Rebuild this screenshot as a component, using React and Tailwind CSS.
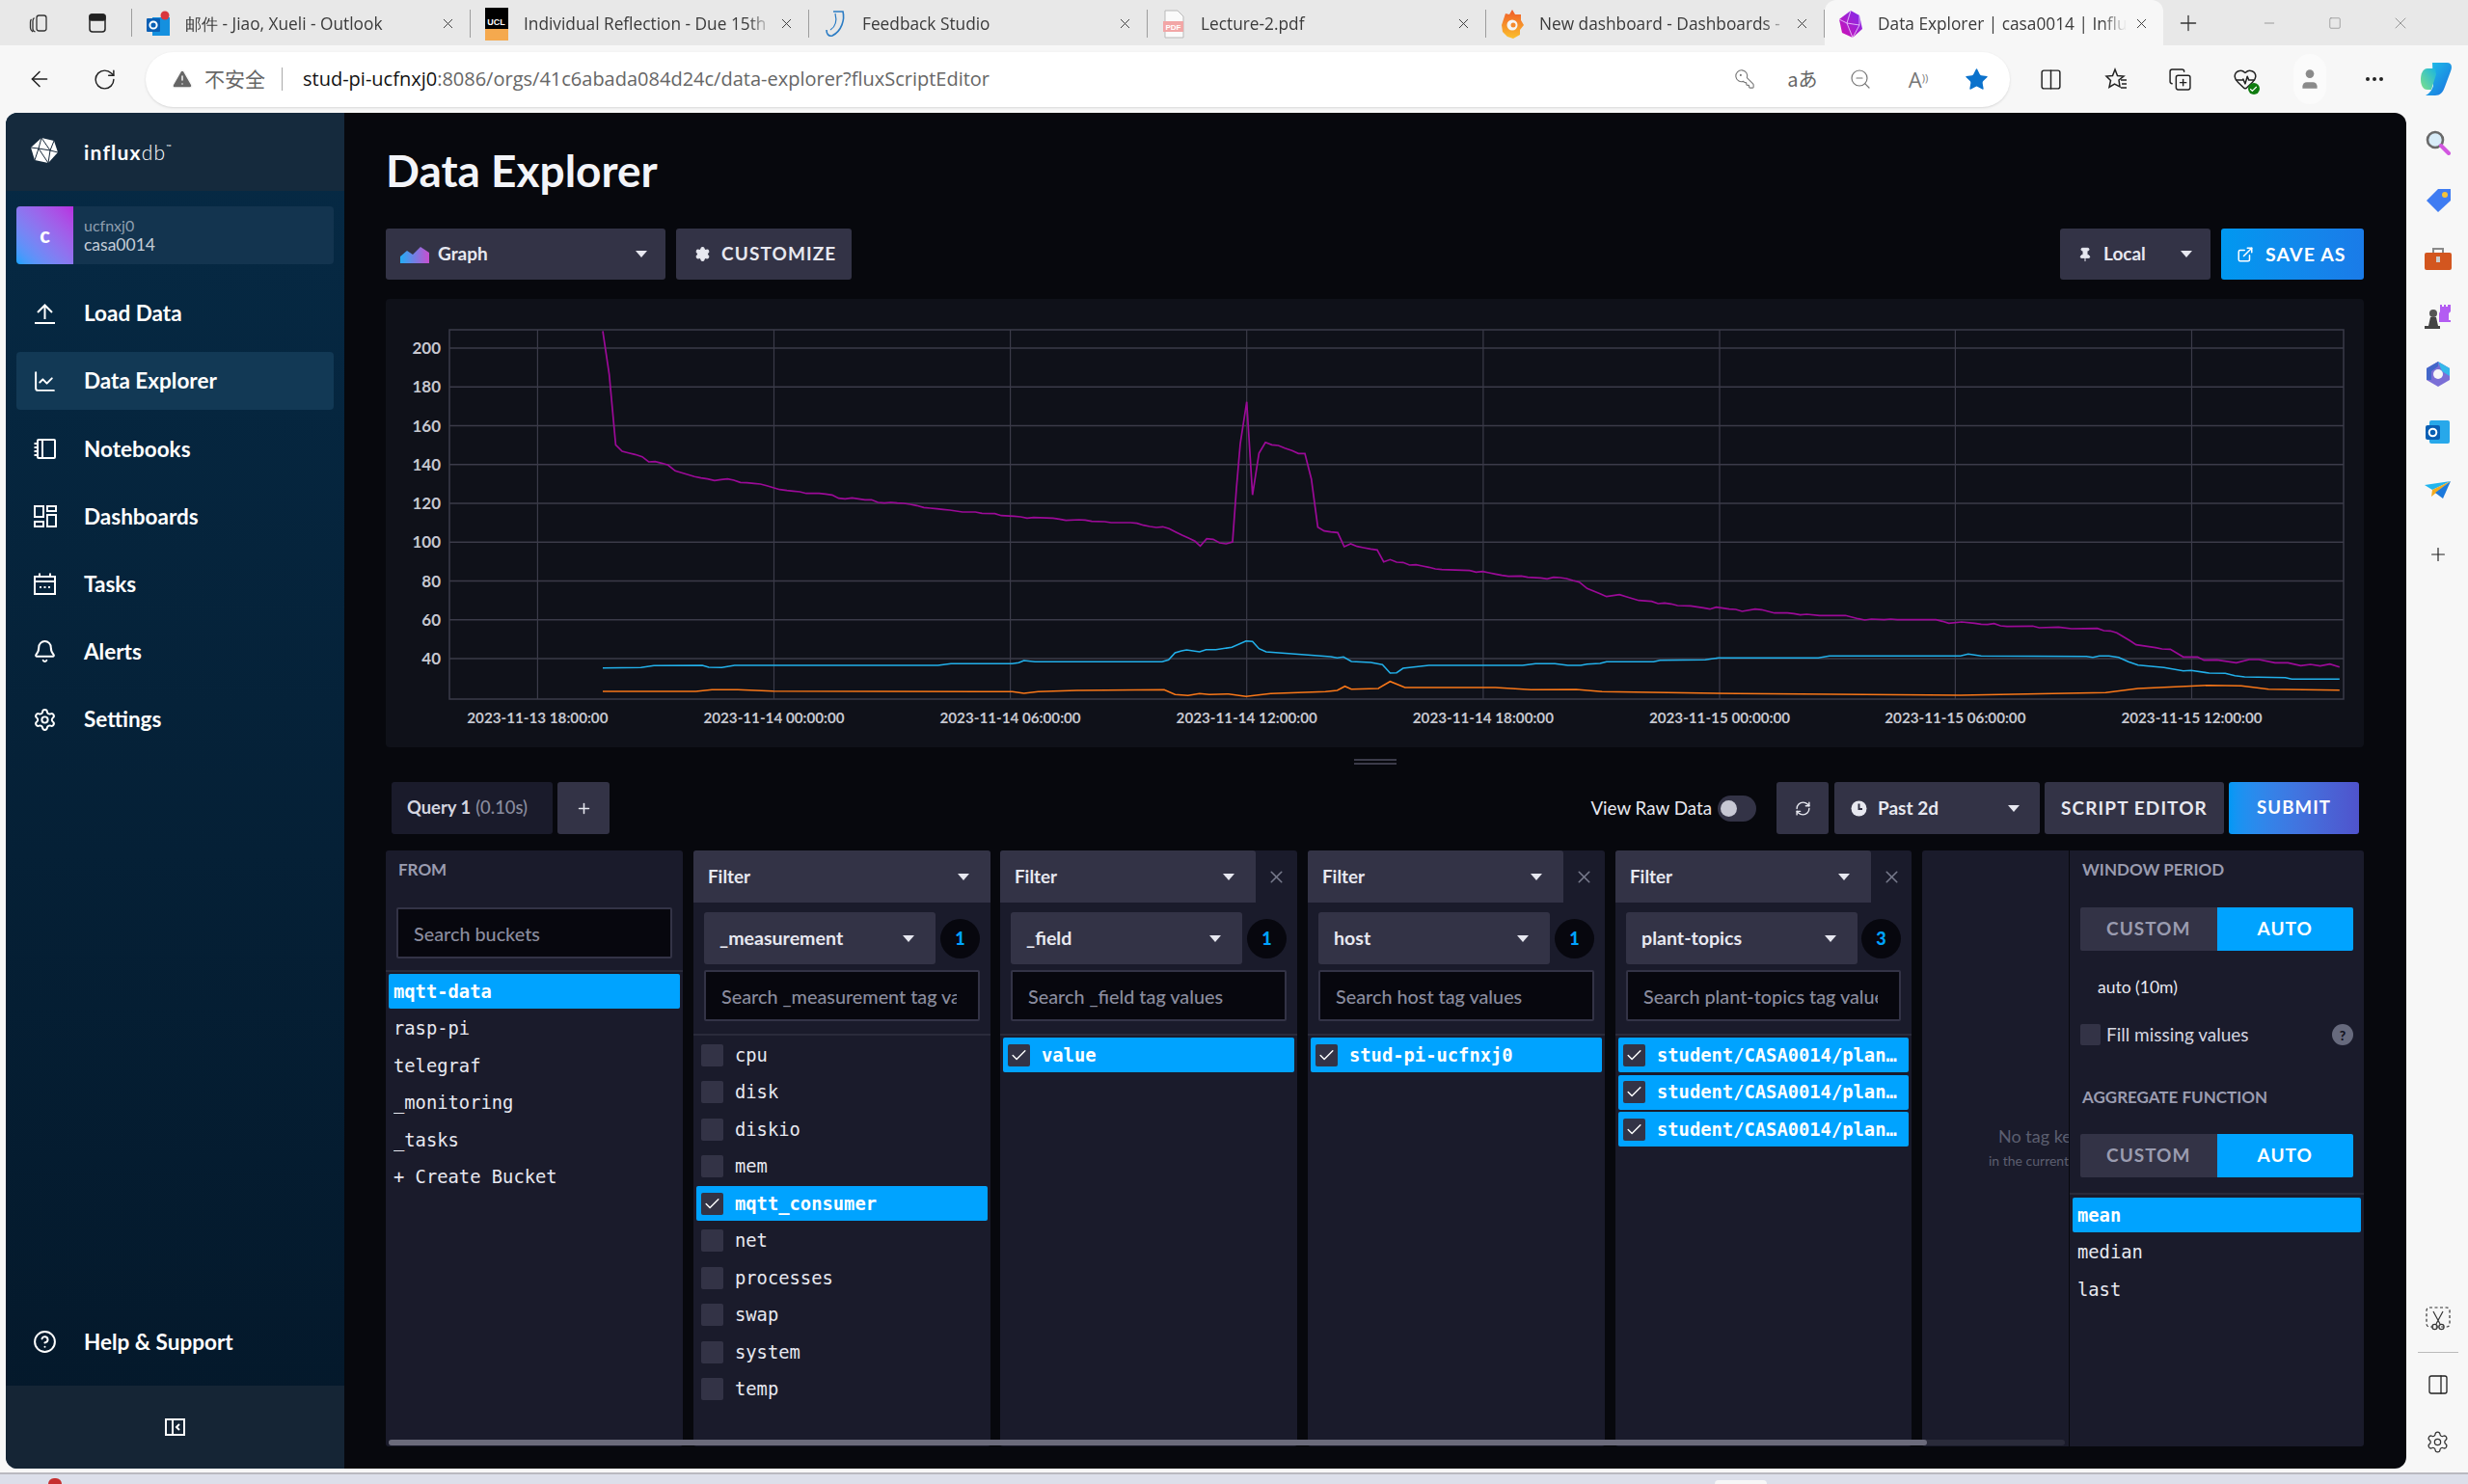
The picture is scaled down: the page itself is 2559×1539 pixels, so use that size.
import React from 'react';
import {
  ArrowLeft, RotateCw, KeyRound, ZoomOut, Star, Columns2, CopyPlus, HeartPulse, User, MoreHorizontal,
  LineChart, Bell, Settings, HelpCircle, Check, X, Plus, Minus, Square,
  RefreshCw, ExternalLink, PanelRight, TriangleAlert, Pin,
} from 'lucide-react';

const UI = "font-['Lato','Open_Sans',sans-serif]";

// traced from the reference, as pairs in two crop spaces (left half / right half)
const L = 390, R = 1420, SX = 1.4933;
const toPts = (arr, base) => {
  const out = [];
  for (let i = 0; i < arr.length; i += 2) out.push(`${(base + arr[i] / SX).toFixed(1)},${(320 + arr[i + 1] / 3).toFixed(1)}`);
  return out.join(' ');
};

const purpleA = [351,70,361,205,371,424,381,444,391,449,401,454,412,461,422,477,432,476,442,481,452,487,463,505,473,511,483,517,493,523,503,527,513,530,524,535,534,532,544,530,554,534,564,541,574,542,585,544,595,546,605,551,615,557,625,563,636,566,646,568,656,570,666,575,686,575,696,577,706,580,716,590,726,592,737,589,747,592,757,595,767,595,777,603,787,605,797,603,807,605,817,606,827,609,837,613,848,619,858,621,868,623,878,625,888,627,898,630,908,633,928,633,938,637,958,638,968,644,988,646,998,648,1008,652,1018,650,1048,652,1058,655,1068,659,1088,657,1098,658,1108,662,1128,663,1138,666,1168,666,1178,668,1188,674,1198,678,1208,681,1218,679,1228,685,1238,695,1248,705,1258,714,1268,724,1276,739,1286,716,1296,718,1306,729,1316,732,1326,726,1332,560,1338,420,1348,290,1357,580,1367,450,1377,416,1387,424,1397,426,1407,434,1418,442,1428,451,1438,451,1448,530,1458,680,1468,692,1478,695,1489,697,1499,741,1509,732,1519,740,1529,744,1540,748,1550,751,1560,788];
const purpleB = [22,788,32,781,42,789,52,790,62,798,72,797,82,801,92,805,102,810,112,812,155,815,165,820,175,818,185,822,195,826,205,830,215,833,235,832,245,836,265,838,275,841,285,836,295,837,305,840,315,846,325,851,337,871,347,879,357,887,367,896,387,890,397,896,407,902,417,908,437,911,447,918,457,916,467,919,477,924,497,925,507,928,517,931,527,935,537,929,557,935,567,936,577,942,597,935,607,937,617,942,627,947,647,947,657,949,667,953,677,951,697,955,737,955,747,960,757,965,767,969,777,966,797,968,807,966,817,968,877,968,887,973,897,979,917,975,937,979,947,982,957,983,967,980,977,987,987,989,1027,988,1037,993,1067,991,1087,996,1127,995,1137,1002,1147,1003,1157,1009,1167,1021,1177,1033,1187,1046,1197,1049,1217,1055,1227,1059,1240,1060,1260,1084,1282,1084,1292,1094,1312,1093,1342,1102,1362,1092,1377,1092,1402,1102,1422,1102,1442,1111,1457,1107,1472,1112,1487,1106,1502,1115];
const blueA = [351,1118,410,1117,430,1111,505,1110,515,1116,535,1117,555,1110,870,1110,890,1105,985,1105,995,1102,1003,1095,1020,1099,1217,1099,1227,1093,1237,1071,1247,1065,1255,1062,1275,1068,1285,1061,1300,1061,1325,1054,1347,1034,1357,1036,1367,1058,1378,1068,1478,1083,1488,1087,1498,1084,1510,1098,1540,1101,1558,1108];
const blueB = [20,1108,32,1134,42,1133,52,1119,92,1110,237,1110,257,1105,287,1105,307,1110,327,1110,337,1106,357,1104,367,1099,440,1099,450,1094,520,1093,540,1087,695,1087,712,1081,915,1081,927,1075,947,1081,1110,1082,1120,1085,1130,1081,1145,1081,1160,1085,1175,1099,1190,1109,1230,1117,1260,1127,1272,1126,1300,1134,1325,1135,1340,1142,1355,1146,1418,1148,1428,1153,1502,1153];
const orangeA = [351,1191,495,1191,520,1186,560,1186,615,1190,985,1192,1003,1197,1025,1192,1085,1188,1220,1186,1237,1201,1257,1204,1275,1198,1290,1201,1320,1199,1347,1207,1385,1198,1470,1192,1488,1188,1500,1175,1510,1184,1552,1182];
const orangeB = [15,1180,32,1160,55,1179,195,1179,250,1186,320,1185,360,1192,570,1198,915,1203,1140,1195,1190,1182,1300,1172,1350,1174,1392,1184,1502,1187];

const Caret = ({ className = 'w-[12px] h-[7px]' }) => (
  <svg viewBox="0 0 12 7" className={`${className} shrink-0`}><polygon points="0,0 12,0 6,7" fill="#e7e8f0" /></svg>
);

const InfluxLogo = ({ size = 30, fill = '#fff', line = '#16283a' }) => (
  <svg width={size} height={size} viewBox="0 0 30 30" className="shrink-0">
    <polygon points="12,2 25,5 29,17 19,28 5,25 1,12" fill={fill} />
    <path d="M12 2 L9 13 L1 12 M9 13 L21 15 L25 5 M21 15 L19 28 M9 13 L5 25 M21 15 L29 17 M12 2 L21 15 M9 13 L19 28" stroke={line} strokeWidth="1" fill="none" />
  </svg>
);

const TabIcon = ({ kind }) => {
  if (kind === 'outlook') return (
    <svg width="26" height="28" viewBox="0 0 26 28" className="shrink-0">
      <rect x="7" y="7" width="18" height="19" fill="#1490df" />
      <rect x="1" y="8" width="14" height="14" rx="1" fill="#0a5fb4" />
      <circle cx="8" cy="15" r="3.6" fill="none" stroke="#fff" strokeWidth="2" />
      <circle cx="20" cy="5" r="4.5" fill="#d9363e" />
    </svg>
  );
  if (kind === 'ucl') return (
    <div className="w-[24px] h-[34px] shrink-0 flex flex-col">
      <div className="h-[22px] bg-black text-white text-[9px] font-bold font-['Liberation_Sans',sans-serif] flex items-end justify-center leading-none pb-[2px]">UCL</div>
      <div className="flex-1 bg-[#f5a94e]" />
    </div>
  );
  if (kind === 'feedback') return (
    <svg width="24" height="30" viewBox="0 0 24 30" className="shrink-0" fill="none">
      <path d="M10 2 H20 C22 10 19 22 9 27 C5 28 3 25 3 21" stroke="#2b7cc4" strokeWidth="1.6" />
      <path d="M12 4 C14 12 12 18 7 21" stroke="#2b7cc4" strokeWidth="1.2" />
    </svg>
  );
  if (kind === 'pdf') return (
    <svg width="24" height="30" viewBox="0 0 24 30" className="shrink-0">
      <path d="M3 1 H16 L22 7 V29 H3 Z" fill="#fafafa" stroke="#b9b9b9" />
      <rect x="1" y="12" width="21" height="11" fill="#f2a6a6" />
      <text x="11.5" y="21" textAnchor="middle" fontSize="8" fontWeight="700" fill="#fff" fontFamily="Liberation Sans">PDF</text>
    </svg>
  );
  if (kind === 'grafana') return (
    <svg width="24" height="32" viewBox="0 0 24 32" className="shrink-0">
      <defs><linearGradient id="gf" x1="0" y1="1" x2="0" y2="0"><stop offset="0" stopColor="#fbc02d" /><stop offset="1" stopColor="#f05a28" /></linearGradient></defs>
      <path d="M12 1 L15 6 L21 6 L21 12 L24 17 L20 22 L20 27 L13 31 L7 29 L2 24 L1 17 L3 11 L5 5 L9 6 Z" fill="url(#gf)" />
      <circle cx="12" cy="17" r="5.5" fill="#f5f5f5" />
      <circle cx="13" cy="17" r="2.5" fill="#f58a2c" />
    </svg>
  );
  return (
    <svg width="24" height="30" viewBox="0 0 24 30" className="shrink-0">
      <defs><linearGradient id="ix" x1="0" y1="1" x2="1" y2="0"><stop offset="0" stopColor="#d40fb0" /><stop offset="1" stopColor="#7a2ff0" /></linearGradient></defs>
      <polygon points="12,1 21,6 24,20 14,29 3,24 0,10" fill="url(#ix)" />
      <path d="M12 1 L8 14 L14 29 M8 14 L21 16 L21 6 M0 10 L8 14 M21 16 L14 29" stroke="#f0d8ff" strokeWidth="0.8" fill="none" />
    </svg>
  );
};

const Tab = ({ icon, title, active, sep = true }) => (
  <div className={`w-[351px] flex items-center shrink-0 pt-[2px] ${active ? 'bg-[#f7f7f7] rounded-t-xl h-[47px] self-end' : 'h-full'}`}>
    <div className="w-[55px] shrink-0 flex justify-center pr-[2px]"><TabIcon kind={icon} /></div>
    <div className="w-[258px] overflow-hidden whitespace-nowrap text-[17.3px] text-[#3a3a3a] [mask-image:linear-gradient(to_right,black_90%,transparent)]">{title}</div>
    <div className="ml-auto mr-[13px] w-[20px] flex justify-center"><X size={17} strokeWidth={1.3} className="text-[#333]" /></div>
    {sep && <div className="w-px h-[29px] bg-[#9d9d9d] shrink-0" />}
  </div>
);

const TabStrip = () => (
  <div className="h-[47px] bg-[#e8e8e8] flex items-center shrink-0 font-['Open_Sans',sans-serif]">
    <div className="w-[71px] flex justify-end pr-[18px]">
      <svg width="24" height="24" viewBox="0 0 24 24" fill="none" stroke="#333" strokeWidth="1.3"><rect x="9" y="4" width="10" height="16" rx="2.5" /><path d="M6.5 6.5 C5 7.5 5 8 5 10 V18 C5 20 6 20.5 7.5 21 M3.5 8 C2.5 9 2.5 10 2.5 11 V17 C2.5 19 3.5 20 5 21" /></svg>
    </div>
    <div className="w-[60px] flex justify-center">
      <svg width="22" height="24" viewBox="0 0 22 24" fill="none" stroke="#222" strokeWidth="1.5"><rect x="3" y="3" width="16" height="18" rx="3" /><rect x="3" y="3" width="16" height="6" rx="2" fill="#222" /></svg>
    </div>
    <div className="w-[6px] flex justify-end"><div className="w-px h-[29px] bg-[#9d9d9d]" /></div>
    <Tab icon="outlook" title="邮件 - Jiao, Xueli - Outlook" />
    <Tab icon="ucl" title="Individual Reflection - Due 15th" />
    <Tab icon="feedback" title="Feedback Studio" />
    <Tab icon="pdf" title="Lecture-2.pdf" />
    <Tab icon="grafana" title="New dashboard - Dashboards -" />
    <Tab icon="influx" title="Data Explorer | casa0014 | Influx" active sep={false} />
    <div className="w-[52px] flex justify-center"><Plus size={26} strokeWidth={1.2} className="text-[#333]" /></div>
    <div className="w-[68px] flex justify-center ml-[24px]"><Minus size={16} strokeWidth={1.2} className="text-[#888]" /></div>
    <div className="w-[68px] flex justify-center"><Square size={14} strokeWidth={1.2} className="text-[#888]" /></div>
    <div className="w-[68px] flex justify-center"><X size={20} strokeWidth={1} className="text-[#888]" /></div>
  </div>
);

const ToolIcon = ({ children, width = 'w-[67px]' }) => <div className={`${width} flex justify-center shrink-0`}>{children}</div>;

const AddressBar = () => (
  <div className="h-[70px] bg-[#f7f7f7] flex items-center shrink-0 font-['Open_Sans',sans-serif]">
    <div className="w-[74px] shrink-0 flex justify-end pr-[20px]"><ArrowLeft size={26} strokeWidth={1.4} className="text-[#222]" /></div>
    <div className="w-[68px] shrink-0 flex justify-center"><RotateCw size={25} strokeWidth={1.4} className="text-[#222]" /></div>
    <div className="w-[1933px] ml-[9px] h-[57px] bg-white rounded-full flex items-center shadow-sm shrink-0">
      <TriangleAlert size={24} fill="#666" strokeWidth={1.5} className="text-[#f7f7f7] ml-[26px]" />
      <span className="ml-[11px] w-[70px] text-[21px] text-[#666] font-['Noto_Sans_CJK_SC',sans-serif] whitespace-nowrap">不安全</span>
      <div className="ml-[10px] w-px h-[24px] bg-[#aaa]" />
      <div className="ml-[21px] text-[20px] whitespace-nowrap">
        <span className="text-[#111]">stud-pi-ucfnxj0</span><span className="text-[#666]">:8086/orgs/41c6abada084d24c/data-explorer?fluxScriptEditor</span>
      </div>
      <div className="flex-1" />
      <ToolIcon width="w-[60px]"><KeyRound size={22} strokeWidth={1.2} className="text-[#777] -scale-x-100" /></ToolIcon>
      <ToolIcon width="w-[60px]"><span className="text-[20px] text-[#666] font-['Noto_Sans_CJK_JP',sans-serif] whitespace-nowrap">aあ</span></ToolIcon>
      <ToolIcon width="w-[60px]"><ZoomOut size={24} strokeWidth={1.2} className="text-[#777]" /></ToolIcon>
      <ToolIcon width="w-[60px]"><span className="text-[22px] text-[#777]">A<sup className="text-[11px]">))</sup></span></ToolIcon>
      <ToolIcon width="w-[60px]"><Star size={27} fill="#0b72cc" strokeWidth={0} /></ToolIcon>
      <div className="w-[5px]" />
    </div>
    <div className="w-[9px] shrink-0" />
    <ToolIcon><Columns2 size={25} strokeWidth={1.4} className="text-[#222]" /></ToolIcon>
    <ToolIcon>
      <svg width="26" height="26" viewBox="0 0 26 26" fill="none" stroke="#222" strokeWidth="1.5"><path d="M12 3 L14.5 9.5 L21 10 L16 14 L17 21 L11.5 18 L6 21.5 L7.5 14.5 L3 10 L9.5 9.5 Z" /><path d="M18 14 H24 M19 18 H24 M18 22 H24" /></svg>
    </ToolIcon>
    <ToolIcon><CopyPlus size={25} strokeWidth={1.4} className="text-[#222]" /></ToolIcon>
    <ToolIcon>
      <div className="relative">
        <HeartPulse size={26} strokeWidth={1.4} className="text-[#222]" />
        <div className="absolute -right-[2px] -bottom-[3px] w-[12px] h-[12px] rounded-full bg-[#107c10] flex items-center justify-center"><Check size={9} strokeWidth={3} className="text-white" /></div>
      </div>
    </ToolIcon>
    <ToolIcon>
      <div className="w-[34px] h-[52px] rounded-full bg-[#fbfbfb] flex items-center justify-center"><User size={26} fill="#8a8a8a" strokeWidth={0} /></div>
    </ToolIcon>
    <ToolIcon><MoreHorizontal size={24} strokeWidth={2} className="text-[#222]" /></ToolIcon>
    <ToolIcon width="w-[64px]">
      <svg width="36" height="38" viewBox="0 0 36 38">
        <defs>
          <linearGradient id="cp1" x1="0" y1="0" x2="1" y2="1"><stop offset="0" stopColor="#1fc4e8" /><stop offset="1" stopColor="#1a6fe0" /></linearGradient>
          <linearGradient id="cp2" x1="0" y1="1" x2="1" y2="0"><stop offset="0" stopColor="#7ee08a" /><stop offset="1" stopColor="#19b5e0" /></linearGradient>
        </defs>
        <path d="M13 2 H28 C33 2 34 6 32 11 L26 27 C24 33 21 36 16 36 H6 C10 34 13 30 14 26 Z" fill="url(#cp1)" />
        <path d="M16 8 L8 8 C3 8 1 14 1 19 C1 25 3 30 8 30 L12 30 L17 14 Z" fill="url(#cp2)" />
      </svg>
    </ToolIcon>
  </div>
);

const SIcon = ({ children }) => (
  <svg width="25" height="25" viewBox="0 0 25 25" fill="none" stroke="currentColor" strokeWidth="2">{children}</svg>
);
const UploadIcon = () => <SIcon><path d="M2 22 H23 M12.5 18 V4 M5 11 L12.5 3.5 L20 11" /></SIcon>;
const NotebookIcon = () => <SIcon><rect x="5" y="3" width="18" height="19" rx="1" /><path d="M10 3 V22 M1.5 7 H5 M1.5 11 H5 M1.5 15 H5 M1.5 19 H5" /></SIcon>;
const DashIcon = () => <SIcon><rect x="2" y="2" width="9" height="11" /><rect x="15" y="2" width="9" height="5" /><rect x="2" y="18" width="9" height="5" /><rect x="15" y="11" width="9" height="12" /></SIcon>;
const TaskIcon = () => <SIcon><rect x="2" y="5" width="21" height="18" /><path d="M2 10 H23 M7 1.5 V6 M18 1.5 V6 M7 16 H9 M11.5 16 H13.5 M16 16 H18" /></SIcon>;

const NAV = [
  { label: 'Load Data', icon: UploadIcon },
  { label: 'Data Explorer', icon: () => <LineChart size={25} strokeWidth={1.9} />, active: true },
  { label: 'Notebooks', icon: NotebookIcon },
  { label: 'Dashboards', icon: DashIcon },
  { label: 'Tasks', icon: TaskIcon },
  { label: 'Alerts', icon: () => <Bell size={25} strokeWidth={1.9} /> },
  { label: 'Settings', icon: () => <Settings size={25} strokeWidth={1.9} /> },
];

const NavRow = ({ label, icon: Icon, active }) => (
  <div className={`mx-[11px] h-[60px] mb-[10.2px] rounded flex items-center text-white ${active ? 'bg-[#123955]' : ''}`}>
    <div className="w-[59px] flex justify-center"><Icon /></div>
    <span className="ml-[11px] text-[22.5px] font-bold">{label}</span>
  </div>
);

const Sidebar = () => (
  <div className="w-[351px] shrink-0 flex flex-col bg-gradient-to-b from-[#062a45] to-[#04182a]">
    <div className="h-[81px] bg-[#152a3d] flex items-center shrink-0">
      <div className="w-[80px] flex justify-center -mt-[3px]"><InfluxLogo /></div>
      <div className="ml-[1px] text-[21px] text-white leading-none tracking-[1.2px]">
        <span className="font-bold">influx</span><span className="font-light">db</span><sup className="text-[7px] align-super">™</sup>
      </div>
    </div>
    <div className="mx-[11px] mt-[16px] h-[60px] rounded bg-[#13344f] flex overflow-hidden shrink-0">
      <div className="w-[59px] bg-gradient-to-tr from-[#00a3ff] to-[#b82ce0] flex items-center justify-center text-white font-black text-[22px] pb-[2px]">c</div>
      <div className="ml-[11px] flex flex-col justify-center">
        <div className="text-[16px] leading-[20px] text-[#8f9fb0]">ucfnxj0</div>
        <div className="text-[17.5px] leading-[20px] text-[#c4cdd8]">casa0014</div>
      </div>
    </div>
    <div className="mt-[21px]">{NAV.map((n) => <NavRow key={n.label} {...n} />)}</div>
    <div className="flex-1" />
    <div className="mb-[5px]"><NavRow label="Help & Support" icon={() => <HelpCircle size={25} strokeWidth={1.9} />} /></div>
    <div className="h-[86px] bg-[#152535] flex items-center justify-center shrink-0">
      <svg width="21" height="18" viewBox="0 0 21 18" fill="none" stroke="#fff" strokeWidth="2"><rect x="1" y="1" width="19" height="16" /><path d="M8 1 V17" /><path d="M15 6 L12 9 L15 12" /></svg>
    </div>
  </div>
);

const Btn = ({ children, className = '' }) => (
  <div className={`rounded-[3px] bg-[#333346] text-[#e7e8f0] flex items-center shrink-0 ${className}`}>{children}</div>
);

const Chart = () => {
  const ys = [200, 180, 160, 140, 120, 100, 80, 60, 40];
  const yOf = (v) => 361 + (200 - v) * 2.0125;
  const xs = [
    [557.4, '2023-11-13 18:00:00'], [802.5, '2023-11-14 00:00:00'], [1047.6, '2023-11-14 06:00:00'], [1292.7, '2023-11-14 12:00:00'],
    [1537.9, '2023-11-14 18:00:00'], [1783, '2023-11-15 00:00:00'], [2027.4, '2023-11-15 06:00:00'], [2272.5, '2023-11-15 12:00:00'],
  ];
  return (
    <div className="h-[465px] mt-[20px] bg-[#0f1119] rounded-[4px] shrink-0">
      <svg viewBox="400 310 2051 465" className="w-full h-full block">
        <rect x="466" y="342" width="1964" height="383" fill="none" stroke="#3b3b49" strokeWidth="1.5" />
        {ys.map((v) => <line key={v} x1="466" x2="2430" y1={yOf(v)} y2={yOf(v)} stroke="#3b3b49" strokeWidth="1.5" />)}
        {xs.map(([x]) => <line key={x} x1={x} x2={x} y1="342" y2="725" stroke="#3b3b49" strokeWidth="1.2" />)}
        <polyline points={`${toPts(orangeA, L)} ${toPts(orangeB, R)}`} fill="none" stroke="#f97718" strokeWidth="1.6" />
        <polyline points={`${toPts(blueA, L)} ${toPts(blueB, R)}`} fill="none" stroke="#22b0ea" strokeWidth="1.6" />
        <polyline points={`${toPts(purpleA, L)} ${toPts(purpleB, R)}`} fill="none" stroke="#9b0a97" strokeWidth="1.7" />
        {ys.map((v) => <text key={v} x="457" y={yOf(v) + 6} textAnchor="end" fontFamily="Lato" fontWeight="700" fontSize="17" fill="#c6c7d0">{v}</text>)}
        {xs.map(([x, t]) => <text key={t} x={x} y="750" textAnchor="middle" fontFamily="Lato" fontWeight="700" fontSize="15.2" fill="#c6c7d0">{t}</text>)}
      </svg>
    </div>
  );
};

const MONO = "font-['DejaVu_Sans_Mono',monospace] text-[18.8px]";

const BucketRow = ({ label, selected }) => (
  <div className={`h-[36px] mb-[2.5px] mx-[3px] rounded-[2px] flex items-center px-[5px] pt-[2px] ${MONO} ${selected ? 'bg-[#00a3ff] text-white font-bold' : 'text-[#e7e8f0]'}`}>
    <span className="whitespace-nowrap overflow-hidden">{label}</span>
  </div>
);

const CheckRow = ({ label, selected }) => (
  <div className={`h-[36px] mb-[2.5px] mx-[3px] rounded-[2px] flex items-center px-[5px] ${MONO} ${selected ? 'bg-[#00a3ff] text-white font-bold' : 'text-[#e7e8f0]'}`}>
    <div className="w-[23px] h-[23px] rounded-[2px] bg-[#333346] shrink-0 flex items-center justify-center">
      {selected && <Check size={19} strokeWidth={1.8} className="text-white" />}
    </div>
    <span className="ml-[12px] pt-[2px] whitespace-nowrap overflow-hidden">{label}</span>
  </div>
);

const SearchBox = ({ children, className = '' }) => (
  <div className={`mx-[11px] h-[53px] bg-[#07070e] border-2 border-[#333346] rounded-[2px] flex items-center pl-[16px] pr-[22px] pt-[2px] text-[19.8px] text-[#8a8c9e] font-medium overflow-hidden whitespace-nowrap shrink-0 ${className}`}>
    <span className="overflow-hidden">{children}</span>
  </div>
);

const FilterCol = ({ tag, count, search, items, closable, width = 'w-[308px]', tagWidth = 'w-[240px]', headerWidth = 'w-[265px]' }) => (
  <div className={`${width} h-full shrink-0 bg-[#1a1b2b] rounded-[3px] flex flex-col`}>
    <div className="h-[54px] flex items-stretch shrink-0">
      <Btn className={`${closable ? headerWidth : 'flex-1'} pl-[15px] pr-[22px] justify-between text-[18.8px] font-bold rounded-b-none`}>
        <span>Filter</span><Caret />
      </Btn>
      {closable && <div className="flex-1 flex items-center justify-center"><X size={21} strokeWidth={1.8} className="text-[#777a8c]" /></div>}
    </div>
    <div className="flex items-center mt-[10px] mx-[11px] h-[54px] shrink-0 justify-between">
      <Btn className={`${tagWidth} h-full pl-[16px] pr-[22px] justify-between text-[19.6px] font-bold`}>
        <span>{tag}</span><Caret />
      </Btn>
      <div className="w-[41px] h-[41px] rounded-full bg-[#07070e] text-[#00a3ff] flex items-center justify-center text-[18px] font-black">{count}</div>
    </div>
    <SearchBox className="mt-[6px]">{search}</SearchBox>
    <div className="mt-[13px] h-[2px] bg-[#2a2b3b] shrink-0" />
    <div className="pt-[2px] flex flex-col">
      {items.map(([label, selected, key]) => <CheckRow key={key || label} label={label} selected={selected} />)}
    </div>
  </div>
);

const ToggleGroup = () => (
  <div className="mx-[11px] h-[45px] flex text-[19px] font-bold tracking-[1px] rounded-[2px] overflow-hidden shrink-0">
    <div className="flex-1 bg-[#333346] text-[#9a9cb0] flex items-center justify-center">CUSTOM</div>
    <div className="flex-1 bg-[#00a3ff] text-white flex items-center justify-center">AUTO</div>
  </div>
);

const SectionLabel = ({ children, className = '' }) => (
  <div className={`ml-[13px] text-[17px] font-bold text-[#9a9cb0] leading-[20px] whitespace-nowrap ${className}`}>{children}</div>
);

const Columns = () => (
  <div className="h-[618px] mt-[17px] flex relative shrink-0">
    <div className="w-[308px] h-full shrink-0 bg-[#1a1b2b] rounded-[3px] flex flex-col">
      <SectionLabel className="mt-[10px]">FROM</SectionLabel>
      <SearchBox className="mt-[29px]">Search buckets</SearchBox>
      <div className="mt-[12px] h-[2px] bg-[#2a2b3b] shrink-0" />
      <div className="pt-[2px] flex flex-col">
        <BucketRow label="mqtt-data" selected />
        <BucketRow label="rasp-pi" />
        <BucketRow label="telegraf" />
        <BucketRow label="_monitoring" />
        <BucketRow label="_tasks" />
        <BucketRow label="+ Create Bucket" />
      </div>
    </div>
    <div className="w-[11px] shrink-0" />
    <FilterCol tag="_measurement" count="1" search="Search _measurement tag values" items={[
      ['cpu'], ['disk'], ['diskio'], ['mem'], ['mqtt_consumer', true], ['net'], ['processes'], ['swap'], ['system'], ['temp'],
    ]} />
    <div className="w-[10px] shrink-0" />
    <FilterCol closable tag="_field" count="1" search="Search _field tag values" items={[['value', true]]} />
    <div className="w-[11px] shrink-0" />
    <FilterCol closable tag="host" count="1" search="Search host tag values" items={[['stud-pi-ucfnxj0', true]]} />
    <div className="w-[11px] shrink-0" />
    <FilterCol closable width="w-[307px]" tag="plant-topics" count="3" search="Search plant-topics tag values" items={[
      ['student/CASA0014/plan…', true, 'a'], ['student/CASA0014/plan…', true, 'b'], ['student/CASA0014/plan…', true, 'c'],
    ]} />
    <div className="w-[11px] shrink-0" />
    <div className="w-[152px] h-full shrink-0 bg-[#1a1b2b] rounded-l-[3px] overflow-hidden flex flex-col justify-center">
      <div className="pl-[79px] whitespace-nowrap text-[18px] text-[#5c5f70] leading-[26px]">No tag keys found</div>
      <div className="pl-[69px] whitespace-nowrap text-[14px] text-[#5c5f70] leading-[26px]">in the current time range</div>
    </div>
    <div className="w-[1px] shrink-0" />
    <div className="w-[305px] h-full shrink-0 bg-[#1a1b2b] rounded-r-[3px] flex flex-col">
      <SectionLabel className="mt-[10px]">WINDOW PERIOD</SectionLabel>
      <div className="mt-[29px]"><ToggleGroup /></div>
      <div className="ml-[29px] mt-[27px] text-[17.5px] text-[#e7e8f0] leading-[22px]">auto (10m)</div>
      <div className="mt-[27px] mx-[11px] flex items-center h-[22px]">
        <div className="w-[21px] h-[22px] rounded-[2px] bg-[#333346]" />
        <span className="ml-[6px] text-[19px] text-[#d5d6e0]">Fill missing values</span>
        <div className="flex-1" />
        <div className="w-[22px] h-[22px] rounded-full bg-[#676a7d] text-[#14141f] text-[14px] font-black flex items-center justify-center">?</div>
      </div>
      <SectionLabel className="mt-[44px]">AGGREGATE FUNCTION</SectionLabel>
      <div className="mt-[28px]"><ToggleGroup /></div>
      <div className="mt-[16px] h-[2px] bg-[#2a2b3b] shrink-0" />
      <div className="pt-[3px] flex flex-col">
        <BucketRow label="mean" selected />
        <BucketRow label="median" />
        <BucketRow label="last" />
      </div>
    </div>
    <div className="absolute left-[3px] bottom-[1px] w-[1738px] h-[6px] rounded-full bg-[#2a2b3a]">
      <div className="w-[1595px] h-full rounded-full bg-[#6b6b7b]" />
    </div>
  </div>
);

const ClockDot = () => (
  <svg width="17" height="17" viewBox="0 0 17 17" className="shrink-0"><circle cx="8.5" cy="8.5" r="8" fill="#e7e8f0" /><path d="M8.5 3.5 V9 H12" stroke="#333346" strokeWidth="2" fill="none" /></svg>
);

const Main = () => (
  <div className="flex-1 min-w-0 bg-[#07080d] pl-[43px] pr-[44px] flex flex-col">
    <div className="h-[120px] flex items-center shrink-0 text-[46px] font-bold text-[#f3f4f8] leading-none">Data Explorer</div>
    <div className="h-[53px] flex shrink-0">
      <Btn className="w-[290px] pl-[15px] pr-[19px] text-[19px] font-bold">
        <svg width="30" height="20" viewBox="0 0 30 20" className="shrink-0">
          <defs><linearGradient id="gr" x1="0" y1="0" x2="1" y2="0"><stop offset="0" stopColor="#22adf6" /><stop offset="1" stopColor="#c84fd0" /></linearGradient></defs>
          <path d="M0 19 L0 12 L7 6 L13 10 L21 2 L30 8 L30 19 Z" fill="url(#gr)" />
        </svg>
        <span className="ml-[9px] flex-1">Graph</span><Caret />
      </Btn>
      <Btn className="ml-[11px] w-[182px] pl-[19px] text-[19px] font-bold tracking-[1.1px]">
        <Settings size={17} fill="#e7e8f0" strokeWidth={1.5} />
        <span className="ml-[11px]">CUSTOMIZE</span>
      </Btn>
      <div className="flex-1" />
      <Btn className="w-[156px] pl-[18px] pr-[19px] text-[19px] font-bold">
        <Pin size={16} fill="#e7e8f0" strokeWidth={1.5} />
        <span className="ml-[11px] flex-1">Local</span><Caret />
      </Btn>
      <div className="ml-[11px] w-[148px] rounded-[3px] bg-gradient-to-r from-[#0098f0] to-[#1a7be8] text-white flex items-center pl-[16px] text-[19.5px] font-bold tracking-[1.1px]">
        <ExternalLink size={18} strokeWidth={2} />
        <span className="ml-[12px]">SAVE AS</span>
      </div>
    </div>
    <Chart />
    <div className="h-[36px] flex items-center justify-center shrink-0">
      <div className="w-[44px] flex flex-col gap-[2px] -mt-[6px]">
        <div className="h-[2px] bg-[#3b3b49]" /><div className="h-[2px] bg-[#3b3b49]" />
      </div>
    </div>
    <div className="h-[54px] flex pl-[6px] pr-[5px] shrink-0">
      <div className="w-[167px] rounded-[3px] bg-[#1a1b2b] flex items-center pl-[16px] text-[18.4px] font-bold text-[#d5d6e0]">
        Query 1<span className="ml-[5px] font-medium text-[#8a8c9e]">(0.10s)</span>
      </div>
      <Btn className="ml-[5px] w-[54px] justify-center"><Plus size={17} strokeWidth={2.2} /></Btn>
      <div className="flex-1" />
      <span className="self-center text-[18.8px] text-[#e7e8f0]">View Raw Data</span>
      <div className="self-center ml-[6px] w-[40px] h-[27px] rounded-full bg-[#333346] flex items-center pl-[3px]">
        <div className="w-[17px] h-[17px] rounded-full bg-[#c7c8d4]" />
      </div>
      <Btn className="ml-[21px] w-[54px] justify-center"><RefreshCw size={17} strokeWidth={2} /></Btn>
      <Btn className="ml-[6px] w-[213px] pl-[17px] pr-[21px] text-[19px] font-bold">
        <ClockDot />
        <span className="ml-[11px] flex-1">Past 2d</span><Caret />
      </Btn>
      <Btn className="ml-[5px] w-[186px] justify-center text-[19px] font-bold tracking-[1.1px]">SCRIPT EDITOR</Btn>
      <div className="ml-[5px] w-[135px] rounded-[3px] bg-gradient-to-r from-[#0098f5] to-[#4f53cc] text-white flex items-center justify-center text-[18.6px] font-bold tracking-[1.1px]">SUBMIT</div>
    </div>
    <Columns />
  </div>
);

const RailIcon = ({ children }) => <div className="h-[60px] flex items-center justify-center shrink-0">{children}</div>;

const RightRail = () => (
  <div className="w-[64px] shrink-0 flex flex-col pt-[1px] pl-[1px]">
    <RailIcon>
      <svg width="26" height="26" viewBox="0 0 26 26" fill="none">
        <circle cx="10" cy="10" r="8" fill="#d8ecf8" stroke="#6a6a6a" strokeWidth="2.6" />
        <path d="M16 16 L24 24" stroke="#d257e0" strokeWidth="4" strokeLinecap="round" />
      </svg>
    </RailIcon>
    <RailIcon>
      <svg width="28" height="26" viewBox="0 0 28 26"><path d="M14 1 H27 V13 L14 25 L2 13 Z" fill="#3f7cf2" /><circle cx="21" cy="7" r="3" fill="#f5c23b" /></svg>
    </RailIcon>
    <RailIcon>
      <svg width="28" height="24" viewBox="0 0 28 24"><path d="M9 6 V2 H19 V6" fill="none" stroke="#8a8a8a" strokeWidth="2" /><rect x="0" y="6" width="28" height="18" rx="2" fill="#d3561f" /><rect x="12" y="10" width="4" height="6" fill="#ccc" /></svg>
    </RailIcon>
    <RailIcon>
      <svg width="28" height="28" viewBox="0 0 28 28"><circle cx="9" cy="11" r="4" fill="#555" /><path d="M6 15 H12 L14 24 H16 V27 H0 V24 H4 Z" fill="#444" /><path d="M16 2 H18 V4 H20 V2 H22 V4 H24 V2 H27 V9 L25 11 V18 H27 V20 H15 V11 L16 9 Z" fill="#b35cf2" /></svg>
    </RailIcon>
    <RailIcon>
      <svg width="26" height="28" viewBox="0 0 26 28"><path d="M13 1 L25 8 V20 L13 27 L1 20 V8 Z" fill="#7b6fd6" /><path d="M13 1 L25 8 V16 L17 11 Z" fill="#35b8ea" /><path d="M1 8 L13 1 V6 L6 11 V20 L1 20 Z" fill="#4367c9" /><circle cx="13" cy="14" r="5" fill="#f7f7f7" /></svg>
    </RailIcon>
    <RailIcon>
      <svg width="26" height="26" viewBox="0 0 26 26"><rect x="4" y="1" width="21" height="24" rx="2" fill="#28a8ea" /><rect x="0" y="6" width="15" height="15" rx="2" fill="#0a5fb4" /><circle cx="7.5" cy="13.5" r="3.8" fill="none" stroke="#fff" strokeWidth="2" /></svg>
    </RailIcon>
    <RailIcon>
      <svg width="28" height="20" viewBox="0 0 28 20"><path d="M0 5 L27 1 L8 10 Z" fill="#20b4ee" /><path d="M27 1 L8 10 L7 17 Z" fill="#f3ab1f" /><path d="M27 1 L19 19 L11 13 Z" fill="#1c79dc" /></svg>
    </RailIcon>
    <div className="h-[74px] flex items-center justify-center"><Plus size={22} strokeWidth={1.3} className="text-[#222]" /></div>
    <div className="flex-1" />
    <div className="flex flex-col items-center">
      <div className="h-[36px] flex items-center">
        <svg width="26" height="26" viewBox="0 0 26 26" fill="none" stroke="#333" strokeWidth="1.2">
          <rect x="1" y="1" width="24" height="20" rx="3" strokeDasharray="3 2.5" />
          <path d="M8 5 L15 18 M18 5 L11 18" />
          <circle cx="9.5" cy="21" r="2.6" /><circle cx="16.5" cy="21" r="2.6" />
        </svg>
      </div>
      <div className="w-[42px] h-px bg-[#bbb] mt-[16px] mb-[15px]" />
      <div className="h-[36px] flex items-center"><PanelRight size={24} strokeWidth={1.3} className="text-[#222]" /></div>
      <div className="h-[56px] flex items-center mt-[13px]"><Settings size={25} strokeWidth={1.2} className="text-[#333]" /></div>
    </div>
  </div>
);

export default function App() {
  return (
    <div className={`w-[2559px] h-[1539px] overflow-hidden bg-[#f7f7f7] flex flex-col ${UI}`}>
      <TabStrip />
      <AddressBar />
      <div className="flex h-[1406px] pl-[6px] shrink-0">
        <div className="w-[2489px] flex rounded-xl overflow-hidden shrink-0">
          <Sidebar />
          <Main />
        </div>
        <RightRail />
      </div>
      <div className="h-[4px] shrink-0" />
      <div className="flex-1 border-t-2 border-[#b9b9c0] bg-[#dcdfea] flex items-end">
        <div className="ml-[50px] w-[14px] h-[6px] rounded-t-full bg-[#c62f2f]" />
        <div className="ml-[1714px] w-[54px] h-[4px] rounded-t bg-[#f7f7f7]" />
      </div>
    </div>
  );
}
